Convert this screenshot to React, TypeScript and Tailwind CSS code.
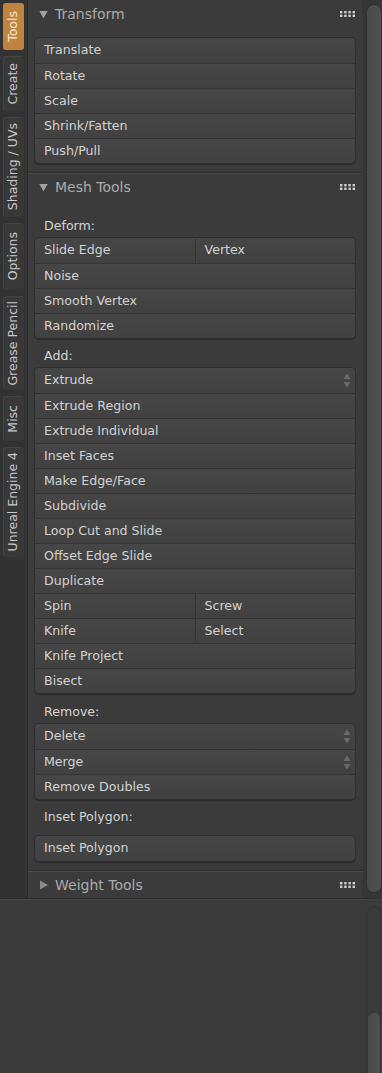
import React from 'react';

type Row = string | [string, string] | { label: string; menu: true };

const tabs: { name: string; h: string; active?: boolean }[] = [
  { name: 'Tools', h: 'h-[47px]', active: true },
  { name: 'Create', h: 'h-[55px]' },
  { name: 'Shading / UVs', h: 'h-[100px]' },
  { name: 'Options', h: 'h-[67px]' },
  { name: 'Grease Pencil', h: 'h-[94px]' },
  { name: 'Misc', h: 'h-[45px]' },
  { name: 'Unreal Engine 4', h: 'h-[110px]' },
];

const Grip = () => (
  <svg width="16" height="6" viewBox="0 0 16 6">
    {[0, 4.2, 8.4, 12.6].map((x) =>
      [0, 3.6].map((y) => <rect key={`${x}-${y}`} x={x} y={y} width="2.4" height="2.4" fill="#d0d0d0" />)
    )}
  </svg>
);

const Arrows = () => (
  <svg width="8" height="15" viewBox="0 0 8 15" className="ml-auto">
    <path d="M4 0.5 L7.5 6 L0.5 6 Z" fill="#6a6a6a" />
    <path d="M0.5 9 L7.5 9 L4 14.5 Z" fill="#6a6a6a" />
  </svg>
);

const PanelHeader = ({ title, open = true }: { title: string; open?: boolean }) => (
  <div className="h-[26px] flex items-center pl-[11px] pr-[6px]">
    {open ? (
      <svg width="9" height="9" viewBox="0 0 9 9">
        <path d="M0.3 1 L8.7 1 L4.5 8.5 Z" fill="#a0a0a0" />
      </svg>
    ) : (
      <svg width="10" height="10" viewBox="0 0 10 10">
        <path d="M1 0.5 L9 5 L1 9.5 Z" fill="#8c8c8c" />
      </svg>
    )}
    <span className={`${open ? 'ml-[7px]' : 'ml-[6px]'} text-[14px] text-[#ababab]`}>{title}</span>
    <div className="ml-auto">
      <Grip />
    </div>
  </div>
);

const Separator = ({ className = '' }: { className?: string }) => (
  <div className={`h-[2px] border-t border-[#2f2f2f] bg-[#4b4b4b] ${className}`} />
);

const Label = ({ text, className = '' }: { text: string; className?: string }) => (
  <div className={`h-[24px] flex items-center pl-[16px] text-[12.6px] text-[#d4d4d4] ${className}`}>{text}</div>
);

const Group = ({ rows, className = '' }: { rows: Row[]; className?: string }) => (
  <div className={`mx-[7px] rounded-[4px] overflow-hidden shadow-[0_0_0_1px_#2f2f2f,0_1px_0_1px_#2a2a2a] ${className}`}>
    {rows.map((r, i) => {
      const base = `h-[25px] flex bg-gradient-to-b from-[#464646] to-[#414141] text-[12.6px] text-[#d2d2d2] ${
        i > 0 ? 'border-t border-[#343434]' : ''
      }`;
      if (Array.isArray(r)) {
        return (
          <div key={i} className={base}>
            <div className="flex-1 flex items-center px-[9px]">{r[0]}</div>
            <div className="flex-1 flex items-center px-[9px] border-l border-[#343434]">{r[1]}</div>
          </div>
        );
      }
      if (typeof r === 'object') {
        return (
          <div key={i} className={`${base} items-center pl-[9px] pr-[4px]`}>
            {r.label}
            <Arrows />
          </div>
        );
      }
      return (
        <div key={i} className={`${base} items-center px-[9px]`}>
          {r}
        </div>
      );
    })}
  </div>
);

const App = () => {
  return (
    <div className="w-[382px] h-[1073px] bg-[#3a3a3a] flex flex-col overflow-hidden" style={{ fontFamily: '"DejaVu Sans", Verdana, sans-serif' }}>
      <div className="h-[898px] flex shrink-0">
        {/* tab column */}
        <div className="w-[28px] bg-[#323232] border-r border-[#2b2b2b] flex flex-col gap-[6px] pt-[3px] pl-[3px]">
          {tabs.map((t) => (
            <div
              key={t.name}
              className={`${t.h} w-[21px] rounded-[3px] flex items-center justify-center ${
                t.active
                  ? 'bg-[#c0843f] text-[#f3e9da]'
                  : 'bg-[#383838] text-[#c9c9c9] shadow-[inset_1px_1px_0_#434343]'
              }`}
            >
              <span className="[writing-mode:vertical-rl] rotate-180 text-[12.5px] whitespace-nowrap">{t.name}</span>
            </div>
          ))}
        </div>

        {/* panels */}
        <div className="flex-1 flex flex-col bg-[#3b3b3b] pt-px">
          <PanelHeader title="Transform" />
          <Group className="mt-[11px]" rows={['Translate', 'Rotate', 'Scale', 'Shrink/Fatten', 'Push/Pull']} />
          <Separator className="mt-[9px]" />
          <PanelHeader title="Mesh Tools" />
          <Label text="Deform:" className="mt-[14px]" />
          <Group rows={[['Slide Edge', 'Vertex'], 'Noise', 'Smooth Vertex', 'Randomize']} />
          <Label text="Add:" className="mt-[6px]" />
          <Group
            rows={[
              { label: 'Extrude', menu: true },
              'Extrude Region',
              'Extrude Individual',
              'Inset Faces',
              'Make Edge/Face',
              'Subdivide',
              'Loop Cut and Slide',
              'Offset Edge Slide',
              'Duplicate',
              ['Spin', 'Screw'],
              ['Knife', 'Select'],
              'Knife Project',
              'Bisect',
            ]}
          />
          <Label text="Remove:" className="mt-[7px]" />
          <Group rows={[{ label: 'Delete', menu: true }, { label: 'Merge', menu: true }, 'Remove Doubles']} />
          <Label text="Inset Polygon:" className="mt-[6px]" />
          <Group className="mt-[7px]" rows={['Inset Polygon']} />
          <Separator className="mt-[9px]" />
          <PanelHeader title="Weight Tools" open={false} />
        </div>

        {/* scrollbar */}
        <div className="w-[20px] bg-[#363636] pl-[5px] pr-[1px] pt-[5px] pb-[6px]">
          <div className="h-full rounded-full bg-gradient-to-r from-[#4a4a4a] to-[#505050] shadow-[0_0_0_1px_#2f2f2f]" />
        </div>
      </div>

      <div className="h-[2px] border-t border-[#2c2c2c] bg-[#474747] shrink-0" />

      <div className="flex-1 flex">
        <div className="flex-1" />
        <div className="w-[20px] pl-[5px] pr-[1px] pt-[6px] flex">
          <div className="flex-1 flex flex-col rounded-t-full border border-b-0 border-[#333333]">
            <div className="flex-1" />
            <div className="h-[60px] rounded-t-full bg-gradient-to-r from-[#4a4a4a] to-[#505050]" />
          </div>
        </div>
      </div>
    </div>
  );
};

export default App;
